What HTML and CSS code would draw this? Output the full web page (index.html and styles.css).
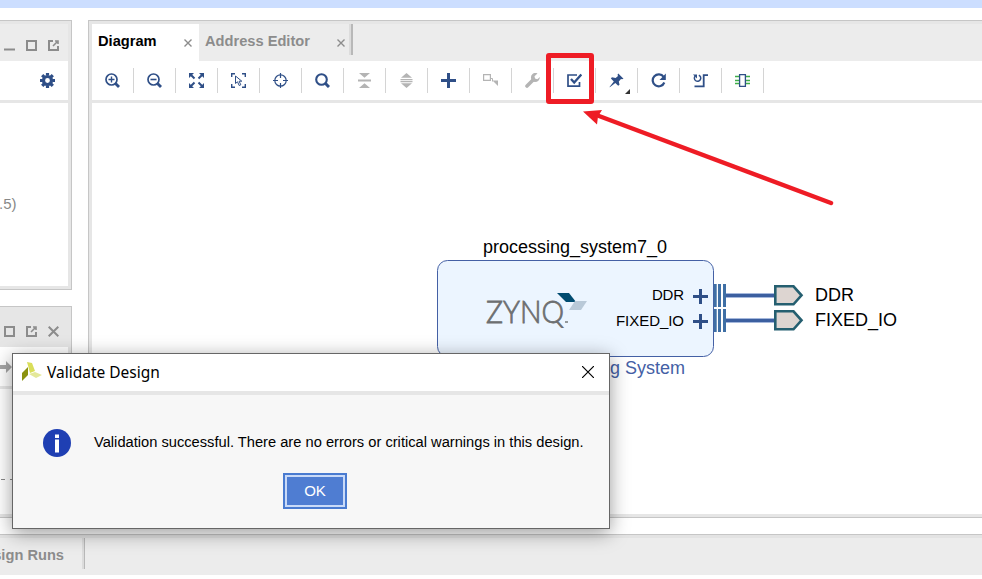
FILE: index.html
```html
<!DOCTYPE html>
<html lang="en">
<head>
    <meta charset="UTF-8">
    <meta name="viewport" content="width=device-width, initial-scale=1.0">
    <title>Validate Design</title>
    <link rel="stylesheet" href="styles.css">
</head>
<body>

    <div class="topbar"></div>

    <main class="workspace">
        <aside class="sidebar">
            <section class="panel panel--sources">
                <div class="panel__header">
                    <svg class="win-icon" viewBox="0 0 11 11"><path d="M0 9.5h11" stroke-width="2"/></svg>
                    <svg class="win-icon" viewBox="0 0 11 11"><path d="M1 1h9v9H1z" stroke-width="2"/></svg>
                    <svg class="win-icon" viewBox="0 0 11 11"><path d="M5 1H1v9h9V6" stroke-width="2"/><path d="M5 6l4-4M7 1h3v3" stroke-width="1.6"/></svg>
                </div>
                <div class="panel__tools">
                    <svg class="icon" viewBox="0 0 15 15">
                        <circle cx="7.5" cy="7.5" r="4" fill="none" stroke-width="3.2"/>
                        <path d="M7.5 0v2.5M7.5 12.500v2.500M0 7.500h2.500M12.500 7.500H15M2.200 2.200l2 2M10.800 10.800l2 2M12.800 2.200l-2 2M4.200 10.800l-2 2" stroke-width="3.2"/>
                    </svg>
                </div>
                <p class="panel__text">.5)</p>
            </section>

            <section class="panel panel--properties">
                <div class="panel__header">
                    <svg class="win-icon" viewBox="0 0 11 11"><path d="M1 1h9v9H1z" stroke-width="2"/></svg>
                    <svg class="win-icon" viewBox="0 0 11 11"><path d="M5 1H1v9h9V6" stroke-width="2"/><path d="M5 6l4-4M7 1h3v3" stroke-width="1.6"/></svg>
                    <svg class="win-icon" viewBox="0 0 11 11"><path d="M.7.7l9.600 9.600M10.300.7L.7 10.300" stroke-width="2"/></svg>
                </div>
                <div class="panel__tools panel__tools--left">
                    <svg class="forward" viewBox="0 0 12 12"><path d="M0 4h6V0l6 6-6 6V8H0z"/></svg>
                </div>
                <div class="dashes"></div>
            </section>
        </aside>

        <section class="editor">
            <div class="tabs">
                <div class="tab tab--active">
                    <span>Diagram</span>
                    <svg class="tab__close" viewBox="0 0 8 8"><path d="M.5.5l7 7M7.500.5l-7 7"/></svg>
                </div>
                <div class="tab tab--address">
                    <span>Address Editor</span>
                    <svg class="tab__close" viewBox="0 0 8 8"><path d="M.5.5l7 7M7.500.5l-7 7"/></svg>
                </div>
                <div class="tabs__end"></div>
            </div>

            <div class="toolbar">
                <!-- zoom in -->
                <div class="tool"><svg class="icon" viewBox="0 0 15 15"><circle cx="6.500" cy="6.500" r="5.500" fill="none" stroke-width="1.700"/><path d="M6.500 3.500v6M3.500 6.500h6" stroke-width="1.400"/><path d="M10.500 10.500l3.500 3.500" stroke-width="2.800"/></svg></div>
                <!-- zoom out -->
                <div class="tool"><svg class="icon" viewBox="0 0 15 15"><circle cx="6.500" cy="6.500" r="5.500" fill="none" stroke-width="1.700"/><path d="M3.500 6.500h6" stroke-width="1.600"/><path d="M10.500 10.500l3.500 3.500" stroke-width="2.800"/></svg></div>
                <!-- zoom fit -->
                <div class="tool"><svg class="icon" viewBox="0 0 15 15"><path class="fill" d="M0 0h5L0 5zM15 0v5l-5-5zM0 15v-5l5 5zM15 15h-5l5-5z"/><path d="M2 2l3.500 3.500M13 2L9.500 5.500M2 13l3.500-3.500M13 13L9.500 9.500" stroke-width="2"/></svg></div>
                <!-- select area -->
                <div class="tool"><svg class="icon" viewBox="0 0 15 15"><path d="M.7 4V.7H4M11 .7h3.300V4M.7 11v3.300H4M11 14.300h3.300V11" fill="none" stroke-width="1.400"/><path d="M4.500 3v7.500l2-1.700 1.700 3.700 1.600-.7-1.700-3.600h2.700z" fill="none" stroke-width="1"/></svg></div>
                <!-- target -->
                <div class="tool"><svg class="icon" viewBox="0 0 15 15"><circle cx="7.500" cy="7.500" r="5.700" fill="none" stroke-width="1.200"/><path d="M7.500 0v5M7.500 10v5M0 7.500h5M10 7.500h5" stroke-width="1.200"/></svg></div>
                <!-- search -->
                <div class="tool"><svg class="icon" viewBox="0 0 15 15"><circle cx="6.500" cy="6.500" r="5.300" fill="none" stroke-width="2.100"/><path d="M10.500 10.500l3.500 3.500" stroke-width="3"/></svg></div>
                <!-- collapse -->
                <div class="tool"><svg class="icon icon--off" viewBox="0 0 15 15"><path class="fill" d="M2 0h11L7.500 4.800zM1 6.500h13v2H1zM2 15h11L7.500 10.200z"/></svg></div>
                <!-- expand -->
                <div class="tool"><svg class="icon icon--off" viewBox="0 0 15 15"><path class="fill" d="M2 4.800h11L7.500 0zM1.500 6h12v1.200h-12zM1.500 8h12v1.200h-12zM2 10.200h11L7.500 15z"/></svg></div>
                <!-- add -->
                <div class="tool"><svg class="icon" viewBox="0 0 15 15"><path d="M7.500 0v15M0 7.500h15" stroke-width="3"/></svg></div>
                <!-- make connection -->
                <div class="tool"><svg class="icon icon--off" viewBox="0 0 15 15"><path d="M.6 1.600h6.800v5.800H.6z" fill="none" stroke-width="1.200"/><path d="M7.500 5.500h2v3" fill="none" stroke-width="1"/><path class="fill" d="M9.500 7.500H15V13z"/></svg></div>
                <!-- customize -->
                <div class="tool"><svg class="icon icon--off" viewBox="0 0 15 15"><path d="M2 13l6.500-6.500" stroke-width="3.600" stroke-linecap="round"/><path class="fill" d="M12.500.4A4.500 4.500 0 0 0 6 5c0 2.500 2 4 4 4 2.700 0 4.700-2 5-5l-2.700 2.200-2.300-.7-.5-2.300z"/></svg></div>
                <!-- validate -->
                <div class="tool tool--marked"><svg class="icon" viewBox="0 0 15 15"><path d="M10 2H1v11.200h11.500V9" fill="none" stroke-width="1.700"/><path d="M4 6l3.200 3.500L14.300 1.500" fill="none" stroke-width="2.300"/></svg></div>
                <!-- pin -->
                <div class="tool tool--menu"><svg class="icon" viewBox="0 0 15 15"><path class="fill" d="M9.300.5l5.200 5.200-1.500.6-1-.2-2.200 2.400.7 3.300-1.300 1-2.900-2.900L.8 14.200l-.3-.3 4.300-5.500L1.900 5.500l1-1.300 3.700.8L9 3l-.5-1.300z"/></svg></div>
                <!-- refresh -->
                <div class="tool"><svg class="icon" viewBox="0 0 15 15"><path d="M12.600 3.800A6 6 0 1 0 13.300 9.500" fill="none" stroke-width="2.200"/><path class="fill" d="M14.800.5V7H8.500z"/></svg></div>
                <!-- regenerate layout -->
                <div class="tool"><svg class="icon" viewBox="0 0 15 15"><path d="M1.500 13.300h9.200V2.200H15" fill="none" stroke-width="1.800"/><path d="M5.800 2.200A3.200 3.200 0 1 1 2.200 3" fill="none" stroke-width="1.500"/><path class="fill" d="M0 1.500h4v4z"/></svg></div>
                <!-- optimize routing -->
                <div class="tool"><svg class="icon" viewBox="0 0 15 15"><path class="green" d="M0 3.500h4M0 7.500h4M0 10.500h4M11 3.500h4M11 7.500h4M11 10.500h4" stroke-width="1.300"/><path d="M4.600 1.600h5.800v11.800H4.600z" fill="none" stroke-width="1.300"/></svg></div>
            </div>

            <div class="canvas">
                <svg class="diagram" viewBox="92 103 890 411">
                    <text class="label" x="483" y="253" textLength="184">processing_system7_0</text>
                    <rect class="block" x="437.500" y="260.500" width="276" height="96" rx="10"/>

                    <text class="logo" x="486" y="323" textLength="78" lengthAdjust="spacingAndGlyphs">ZYNQ</text>
                    <path d="M557 293h12l7 9h-10z" fill="#004b70"/>
                    <path d="M575 301h12l-6 9h-12z" fill="#b9c9d8"/>
                    <path d="M565 322h3" stroke="#76787a" stroke-width="1.500"/>

                    <text class="port" x="652" y="300" textLength="32">DDR</text>
                    <text class="port" x="616" y="326" textLength="68">FIXED_IO</text>
                    <path class="plus" d="M693 296.500h15M700.500 289v15M693 321.500h15M700.500 314v15"/>

                    <path class="bus-edge" d="M726 295.500h48M726 320.500h48"/>
                    <path class="bus" d="M726 295.500h48M726 320.500h48"/>
                    <path class="pins" d="M715.200 284v23M719.500 284v23M724.500 284v23M715.200 309v23M719.500 309v23M724.500 309v23"/>
                    <path class="pad" d="M775.300 286.300h18.200l8 9-8 9h-18.200zM775.300 311.300h18.200l8 9-8 9h-18.200z"/>
                    <text class="label" x="815" y="301" textLength="39">DDR</text>
                    <text class="label" x="815" y="326" textLength="82">FIXED_IO</text>

                    <text class="caption" x="685" y="374" text-anchor="end">ZYNQ7 Processing System</text>
                </svg>
            </div>
        </section>
    </main>

    <footer class="runs">
        <div class="runs__tab">Design Runs</div>
    </footer>

    <div class="dialog">
        <div class="dialog__title">
            <svg class="dialog__logo" viewBox="0 0 20 19">
                <path d="M5 0l5 1 3 8-5 2z" fill="#d9de5a"/>
                <path d="M0 11l6-6v8l-6 6z" fill="#8c9210"/>
                <path d="M7 12l6-2 7 3-6 3z" fill="#e4e89a"/>
            </svg>
            <span>Validate Design</span>
            <svg class="dialog__close" viewBox="0 0 12 12"><path d="M0 0l12 12M12 0L0 12"/></svg>
        </div>
        <div class="dialog__body">
            <div class="dialog__message">
                <svg class="info" viewBox="0 0 28 28">
                    <circle cx="14" cy="14" r="14" fill="#1f3fb3"/>
                    <path d="M14 5.500v3.500M14 10.500v13" stroke="#fff" stroke-width="4"/>
                </svg>
                <p>Validation successful. There are no errors or critical warnings in this design.</p>
            </div>
            <button class="ok">OK</button>
        </div>
    </div>

    <!-- pointer to the validate button -->
    <svg class="pointer" viewBox="0 0 256 104">
        <path d="M18 10L250 97" stroke="#ee1c25" stroke-width="4.500" stroke-linecap="round"/>
        <path d="M2 5.500l19-1.500-4 6.500-1 8z" fill="#ee1c25"/>
    </svg>

</body>
</html>
```

FILE: styles.css
```css
*,
*::before,
*::after{
    box-sizing: border-box;
    padding: 0;
    margin: 0;
}
body{
    height: 579px;
    overflow: hidden;
    background: #fff;
    font-family: "Liberation Sans", Arial, sans-serif;
    font-size: 15px;
}
svg{
    display: block;
    flex: none;
}
.topbar{
    height: 8px;
    background: #ccdeff;
}
.workspace{
    display: flex;
    gap: 16px;
    height: 498px;
    margin: 12px 0 16px;
}

/* left panels */
.sidebar{
    display: flex;
    flex-direction: column;
    gap: 16px;
    width: 72px;
}
.panel{
    border: 1px solid #c6c6c6;
    border-left: none;
    box-shadow: inset -3px 0 #e6e6e6, inset 0 3px #e6e6e6, inset 0 -3px #e6e6e6;
    padding: 3px 3px 3px 0;
}
.panel--sources{
    height: 270px;
}
.panel--properties{
    height: 212px;
}
.panel__header{
    display: flex;
    justify-content: flex-end;
    gap: 11px;
    height: 37px;
    padding: 16px 9px 0 0;
    background: #ececec;
}
.panel--properties .panel__header{
    background: #e6e6e6;
}
.win-icon{
    width: 11px;
    height: 11px;
    fill: none;
    stroke: #8c8c8c;
}
.panel__tools{
    display: flex;
    justify-content: flex-end;
    align-items: center;
    height: 42px;
    padding-right: 13px;
    border-bottom: 3px solid #e6e6e6;
}
.panel__tools--left{
    justify-content: flex-start;
}
.forward{
    width: 12px;
    height: 12px;
    fill: #a6a6a6;
}
.panel__text{
    margin: 92px 0 0 -1px;
    line-height: 18px;
    color: #888;
}
.dashes{
    width: 14px;
    height: 1px;
    margin: 90px 0 0 1px;
    background: repeating-linear-gradient(90deg, #888 0 4px, transparent 4px 9px);
}

/* editor */
.editor{
    flex: 1;
    display: flex;
    flex-direction: column;
    border: 1px solid #c6c6c6;
    border-right: none;
    box-shadow: inset 3px 0 #e6e6e6, inset 0 3px #e6e6e6, inset 0 -3px #e6e6e6;
    padding: 3px 0 3px 3px;
}
.tabs{
    display: flex;
    height: 37px;
    background: #ececec;
}
.tab{
    display: flex;
    justify-content: space-between;
    padding: 8px 7px 0 6px;
    line-height: 18px;
    font-size: 14.65px;
    font-weight: bold;
    color: #8c8c8c;
}
.tab--active{
    width: 107px;
    background: #fff;
    color: #000;
}
.tab--address{
    width: 150px;
    padding-right: 4px;
}
.tab__close{
    width: 8px;
    height: 8px;
    margin-top: 7px;
    stroke: #8c8c8c;
    stroke-width: 1.4;
}
.tabs__end{
    width: 4px;
    height: 31px;
    background: #dcdcdc;
    border-right: 2px solid #b8b8b8;
}
.toolbar{
    display: flex;
    align-items: center;
    height: 42px;
    border-bottom: 3px solid #e6e6e6;
}
.tool{
    position: relative;
    display: flex;
    align-items: center;
    justify-content: center;
    width: 42px;
    height: 25px;
    border-right: 1px solid #d4d4d4;
}
.icon{
    width: 15px;
    height: 15px;
    stroke: #2f4f87;
}
.icon .fill{
    fill: #2f4f87;
    stroke: none;
}
.icon--off{
    stroke: #b4b4b4;
}
.icon--off .fill{
    fill: #b4b4b4;
}
.icon .green{
    stroke: #3fae49;
}
.tool--marked::before{
    content: "";
    position: absolute;
    left: -8px;
    top: -15px;
    z-index: 1;
    width: 48px;
    height: 51px;
    border: 5px solid #ee1c25;
    border-radius: 3px;
}
.tool--menu::after{
    content: "";
    position: absolute;
    right: 7px;
    bottom: -1px;
    border-left: 5px solid transparent;
    border-bottom: 5px solid #333;
}

/* block diagram */
.canvas{
    flex: 1;
}
.diagram{
    width: 890px;
    height: 411px;
}
.label{
    font-size: 18px;
}
.port{
    font-size: 15px;
}
.caption{
    font-size: 18px;
    fill: #4460a5;
}
.logo{
    font-family: Lato, "Liberation Sans", sans-serif;
    font-size: 31px;
    font-weight: 300;
    fill: #6d6f71;
    stroke: #6d6f71;
    stroke-width: .8;
}
.block{
    fill: #ecf5ff;
    stroke: #4460a5;
}
.plus{
    stroke: #2f4f87;
    stroke-width: 3;
}
.bus{
    stroke: #3c5fa0;
    stroke-width: 3;
}
.bus-edge{
    stroke: #a5b8dc;
    stroke-width: 5;
}
.pins{
    stroke: #3f6fa5;
    stroke-width: 3;
}
.pad{
    fill: #ddd5d1;
    stroke: #255f70;
    stroke-width: 2.6;
}

/* bottom panel */
.runs{
    height: 41px;
    border-top: 1px solid #c6c6c6;
    box-shadow: inset 0 3px #e3e3e3;
    background: #ececec;
    padding-top: 3px;
}
.runs__tab{
    display: flex;
    justify-content: flex-end;
    width: 85px;
    height: 31px;
    padding: 8px 20px 0 0;
    border-right: 1px solid #b8b8b8;
    box-shadow: inset -2px 0 #dcdcdc;
    line-height: 18px;
    font-size: 14.65px;
    font-weight: bold;
    color: #8c8c8c;
    white-space: nowrap;
}

/* dialog */
.dialog{
    position: absolute;
    left: 12px;
    top: 353px;
    width: 598px;
    height: 176px;
    border: 1px solid #666;
    background: #f7f7f7;
    box-shadow: 0 4px 18px rgba(0, 0, 0, .4);
}
.dialog__title{
    display: flex;
    align-items: center;
    height: 41px;
    padding: 0 15px 2px 9px;
    border-bottom: 4px solid #e6e6e6;
    background: #fff;
    font-family: "Noto Sans", "Open Sans", sans-serif;
    font-size: 15.5px;
}
.dialog__logo{
    width: 20px;
    height: 19px;
    margin-right: 5px;
}
.dialog__close{
    width: 12px;
    height: 12px;
    margin-left: auto;
    stroke: #000;
    stroke-width: 1.2;
}
.dialog__message{
    display: flex;
    align-items: center;
    gap: 23px;
    padding: 34px 0 0 30px;
    white-space: nowrap;
    font-size: 14.68px;
}
.dialog__message p{
    padding-bottom: 2px;
}
.info{
    width: 28px;
    height: 28px;
}
.ok{
    display: block;
    width: 64px;
    height: 36px;
    margin: 16px 0 0 270px;
    padding-bottom: 2px;
    border: 2px solid #4a7bd0;
    box-shadow: inset 0 0 0 2px #c9daf8;
    background: #4f7dd2;
    color: #fff;
    font: 15px "Liberation Sans", Arial, sans-serif;
}

.pointer{
    position: absolute;
    left: 581px;
    top: 106px;
    width: 256px;
    height: 104px;
}
```
